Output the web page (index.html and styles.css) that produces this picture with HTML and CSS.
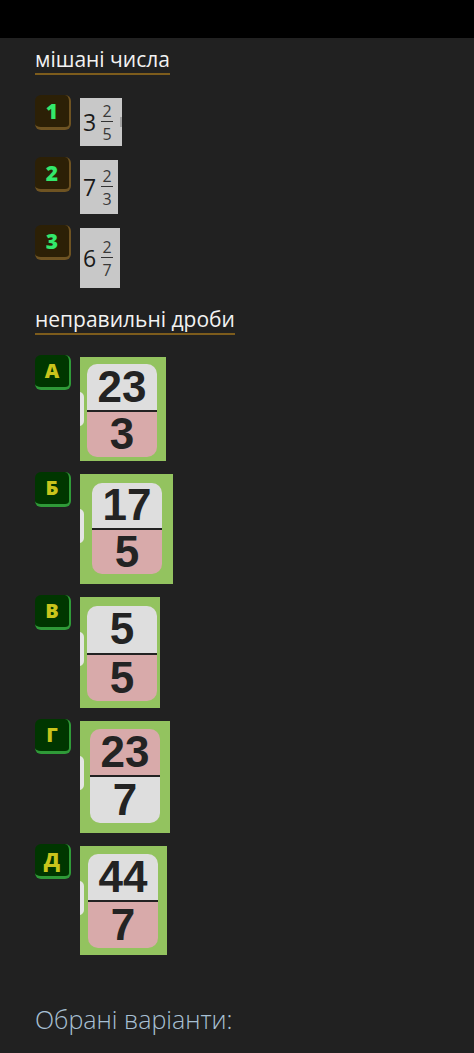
FILE: index.html
```html
<!DOCTYPE html>
<html lang="uk">
<head>
<meta charset="utf-8">
<link rel="stylesheet" href="styles.css">
</head>
<body>
<div class="topbar"></div>
<main class="content">
  <h2 class="group-title"><span>мішані числа</span></h2>
  <div class="row row-mixed">
    <div class="badge badge-num">1</div>
    <div class="mixed m1">
      <span class="whole">3</span>
      <span class="frac"><span>2</span><i></i><span>5</span></span>
      <span class="cut"></span>
    </div>
  </div>
  <div class="row row-mixed">
    <div class="badge badge-num">2</div>
    <div class="mixed m2">
      <span class="whole">7</span>
      <span class="frac"><span>2</span><i></i><span>3</span></span>
    </div>
  </div>
  <div class="row row-mixed">
    <div class="badge badge-num">3</div>
    <div class="mixed m3">
      <span class="whole">6</span>
      <span class="frac"><span>2</span><i></i><span>7</span></span>
    </div>
  </div>

  <h2 class="group-title title2"><span>неправильні дроби</span></h2>

  <div class="row row-imp">
    <div class="badge badge-let">А</div>
    <div class="imp ia">
      <span class="sliver"></span>
      <div class="card"><div class="half gray">23</div><div class="half pink">3</div></div>
    </div>
  </div>
  <div class="row row-imp">
    <div class="badge badge-let">Б</div>
    <div class="imp ib">
      <span class="sliver"></span>
      <div class="card"><div class="half gray">17</div><div class="half pink">5</div></div>
    </div>
  </div>
  <div class="row row-imp">
    <div class="badge badge-let">В</div>
    <div class="imp iv">
      <span class="sliver"></span>
      <div class="card"><div class="half gray">5</div><div class="half pink">5</div></div>
    </div>
  </div>
  <div class="row row-imp">
    <div class="badge badge-let">Г</div>
    <div class="imp ig">
      <span class="sliver"></span>
      <div class="card"><div class="half pink">23</div><div class="half gray">7</div></div>
    </div>
  </div>
  <div class="row row-imp">
    <div class="badge badge-let">Д</div>
    <div class="imp id">
      <span class="sliver"></span>
      <div class="card"><div class="half gray">44</div><div class="half pink">7</div></div>
    </div>
  </div>

  <p class="chosen">Обрані варіанти:</p>
</main>
</body>
</html>
```

FILE: styles.css
```css
html, body {
  margin: 0;
  padding: 0;
}
body {
  background: #212121;
  font-family: "Open Sans", "Noto Sans", sans-serif;
  width: 474px;
  height: 1053px;
  overflow: hidden;
}
.topbar {
  height: 38px;
  background: #000;
}
.content {
  padding: 0 0 0 35px;
}
.group-title {
  margin: 0;
  padding-top: 8px;
  font-weight: 400;
  font-size: 21px;
  line-height: 26px;
  color: #f2f2f2;
}
.group-title span {
  display: inline-block;
  border-bottom: 2px solid #7d5c1c;
  padding-bottom: 1px;
}
.title2 {
  margin-top: -4px;
}
.row {
  display: flex;
  align-items: flex-start;
  gap: 9px;
}
.group-title + .row-mixed {
  margin-top: 23px;
}
.group-title + .row-imp {
  margin-top: 22px;
}
.row-mixed {
  margin-bottom: 14px;
}
.badge {
  box-sizing: border-box;
  width: 36px;
  height: 35px;
  border-radius: 6px;
  display: flex;
  align-items: center;
  justify-content: center;
  font-weight: 800;
  font-size: 21px;
  line-height: 1;
  flex: none;
  margin-top: -3px;
}
.badge-num {
  background: #2c2006;
  border-right: 2px solid #6e5322;
  border-bottom: 3px solid #6e5322;
  color: #33e86c;
}
.badge-let {
  background: #003600;
  border-right: 2px solid #2f9a38;
  border-bottom: 3px solid #2f9a38;
  color: #c9c41c;
  font-size: 20px;
  margin-top: -2px;
}
.mixed {
  background: #c8c8c8;
  position: relative;
  overflow: hidden;
  display: flex;
  align-items: center;
  box-sizing: border-box;
  padding-left: 3px;
  color: #1a1a1a;
}
.m1 { width: 42px; height: 48px; }
.m2 { width: 38px; height: 54px; }
.m3 { width: 40px; height: 60px; }
.whole {
  font-size: 23px;
  line-height: 1;
}
.frac {
  display: flex;
  flex-direction: column;
  align-items: center;
  margin-left: 5px;
  font-size: 16px;
  line-height: 16px;
  color: #383838;
}
.frac i {
  display: block;
  width: 12px;
  height: 1px;
  background: #333;
  margin: 2px 0 4px;
}
.cut {
  position: absolute;
  right: 0;
  top: 19px;
  width: 2px;
  height: 10px;
  background: #8a8a8a;
  opacity: 0.6;
}
.row-imp {
  margin-bottom: 13px;
}
.row-imp:nth-of-type(1) {
  margin-bottom: 14px;
}
.imp {
  background: #93c35f;
  position: relative;
  overflow: hidden;
  box-sizing: border-box;
  flex: none;
}
.sliver {
  position: absolute;
  left: -6px;
  width: 10px;
  height: 34px;
  border-radius: 5px;
  background: #e4e4e4;
  top: 35px;
}
.card {
  width: 70px;
  display: flex;
  flex-direction: column;
}
.half {
  flex: 1;
  display: flex;
  align-items: center;
  justify-content: center;
  font-family: "Liberation Sans", Arial, sans-serif;
  font-weight: 700;
  font-size: 44px;
  color: #232323;
  line-height: 1;
}
.half:first-child {
  border-bottom: 2px solid #222;
  border-radius: 10px 10px 0 0;
}
.half:last-child {
  border-radius: 0 0 10px 10px;
}
.gray { background: #dedede; }
.pink { background: #d8aaaa; }

.ia { width: 86px; height: 104px; padding: 7px 0 4px 7px; }
.ia .card { height: 93px; }
.ib { width: 93px; height: 110px; padding: 9px 0 10px 12px; }
.ib .card { height: 91px; }
.iv { width: 80px; height: 111px; padding: 9px 0 7px 7px; }
.iv .card { height: 95px; }
.ig { width: 90px; height: 112px; padding: 8px 0 10px 10px; }
.ig .card { height: 94px; }
.id { width: 87px; height: 109px; padding: 8px 0 7px 8px; }
.id .card { height: 94px; }

.chosen {
  margin: 47px 0 0;
  font-size: 25px;
  font-weight: 300;
  color: #a8c0d4;
}
```
